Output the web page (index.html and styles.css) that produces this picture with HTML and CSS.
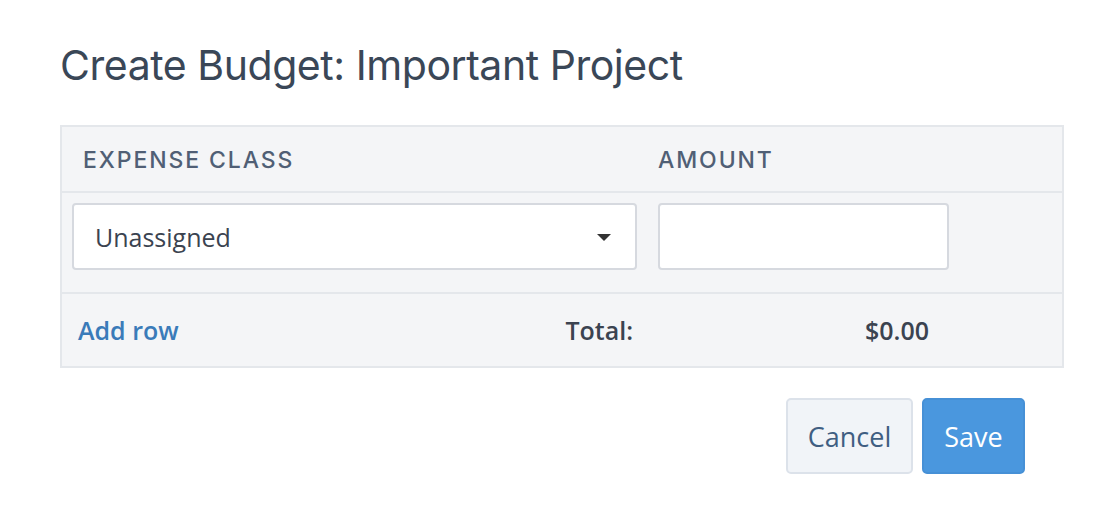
FILE: index.html
```html
<!DOCTYPE html>
<html>
<head>
<meta charset="utf-8">
<link rel="stylesheet" href="styles.css">
</head>
<body>
<div class="modal">
  <h1 class="title">Create Budget: Important Project</h1>
  <div class="budget-table">
    <div class="row head-row">
      <div class="head-cell first">EXPENSE CLASS</div>
      <div class="head-cell">AMOUNT</div>
      <div></div>
    </div>
    <div class="row body-row">
      <div class="select">
        <span class="select-value">Unassigned</span>
        <svg class="caret" width="14" height="8" viewBox="0 0 14 8"><path d="M0 0 H14 L7 7 Z" fill="#333"/></svg>
      </div>
      <div class="input"></div>
      <div></div>
    </div>
    <div class="row foot-row">
      <div class="foot-first">
        <a class="add-row">Add row</a>
        <span class="total-label">Total:</span>
      </div>
      <div class="total-value">$0.00</div>
      <div></div>
    </div>
  </div>
  <div class="actions">
    <button class="btn btn-cancel">Cancel</button>
    <button class="btn btn-save">Save</button>
  </div>
</div>
</body>
</html>
```

FILE: styles.css
```css
html, body {
  margin: 0;
  padding: 0;
  background: #ffffff;
}
body {
  font-family: "Open Sans", "Liberation Sans", sans-serif;
  color: #3b4350;
}
.modal {
  padding: 36px 40px 0 60px;
}
.title {
  margin: 0;
  font-family: Inter, "Liberation Sans", sans-serif;
  font-weight: 400;
  font-size: 41px;
  line-height: 58px;
  color: #3a4757;
  letter-spacing: -0.45px;
}
.budget-table {
  margin-top: 31px;
  border: 2px solid #e4e7eb;
  background: #f4f5f7;
}
.row {
  display: grid;
  grid-template-columns: 565px 291px 1fr;
  column-gap: 21px;
  padding-left: 10px;
  align-items: center;
}
.head-row {
  height: 64px;
  border-bottom: 2px solid #e4e7eb;
}
.head-cell {
  font-family: Inter, "Liberation Sans", sans-serif;
  font-weight: 500;
  font-size: 23px;
  letter-spacing: 1.9px;
  color: #505f75;
  padding-top: 2px;
}
.head-cell.first {
  padding-left: 11px;
}
.body-row {
  height: 101px;
  box-sizing: border-box;
  padding-top: 10px;
  align-items: start;
  border-bottom: 2px solid #e4e7eb;
}
.select {
  height: 67px;
  box-sizing: border-box;
  background: #ffffff;
  border: 2px solid #d6d9df;
  border-radius: 4px;
  display: flex;
  align-items: center;
  justify-content: space-between;
  padding: 0 24px 0 21px;
}
.select-value {
  font-size: 25px;
  color: #3b4350;
}
.caret {
  display: block;
  margin-top: 2px;
}
.input {
  height: 67px;
  box-sizing: border-box;
  background: #ffffff;
  border: 2px solid #d6d9df;
  border-radius: 4px;
}
.foot-row {
  height: 72px;
}
.foot-first {
  display: flex;
  justify-content: space-between;
  align-items: center;
  padding: 0 4px 0 6px;
}
.add-row {
  font-size: 25px;
  font-weight: 600;
  color: #3a7bb9;
  cursor: pointer;
}
.total-label, .total-value {
  font-size: 25px;
  font-weight: 600;
  color: #3b4350;
}
.total-value {
  text-align: right;
  padding-right: 20px;
}
.actions {
  display: flex;
  justify-content: flex-end;
  gap: 9px;
  margin-top: 30px;
  padding-right: 39px;
}
.btn {
  font-family: "Open Sans", "Liberation Sans", sans-serif;
  font-size: 27px;
  font-weight: 500;
  height: 76px;
  border-radius: 5px;
  box-sizing: border-box;
  cursor: pointer;
}
.btn-cancel {
  width: 127px;
  background: #f1f4f8;
  border: 2px solid #dce2ea;
  color: #3f5e82;
}
.btn-save {
  width: 103px;
  background: #4a97de;
  border: 2px solid #4690d6;
  color: #ffffff;
}
```
